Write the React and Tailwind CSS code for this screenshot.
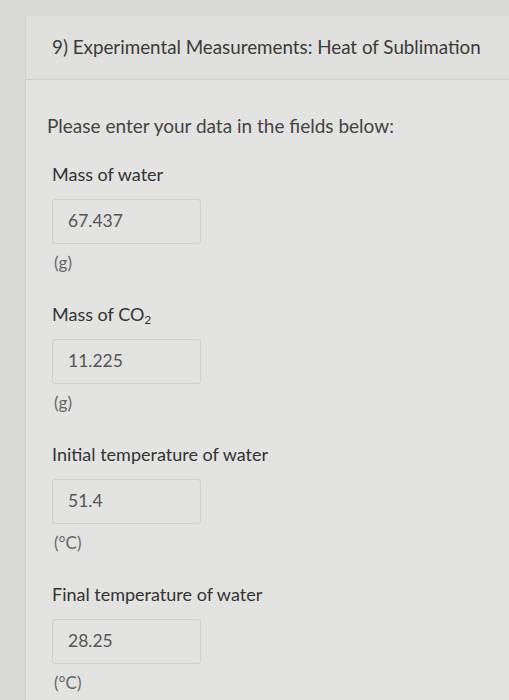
import React from 'react';

const FIELDS = [
  { label: 'Mass of water', value: '67.437', unit: '(g)' },
  { label: <>Mass of CO<sub className="text-[12px]">2</sub></>, value: '11.225', unit: '(g)' },
  { label: 'Initial temperature of water', value: '51.4', unit: '(°C)' },
  { label: 'Final temperature of water', value: '28.25', unit: '(°C)' },
];

export default function App() {
  return (
    <div className="w-[509px] h-[700px] overflow-hidden bg-[#d9d9d7] pl-[25px] pt-[16px] text-[#3b3b3b]" style={{ fontFamily: 'Lato, "Open Sans", sans-serif' }}>
      <div className="h-full bg-[#e2e2e0] border-l border-[#d0d0ce]">
        {/* Header */}
        <div className="h-[64px] flex items-center pl-[26px] bg-[#dfdfdd] border-b border-[#cfcfcd]">
          <h1 className="text-[18.8px] text-[#3a3a3a]">9) Experimental Measurements: Heat of Sublimation</h1>
        </div>

        <div className="pl-[21px] pt-[34px]">
          <p className="text-[19px] leading-[24px] text-[#444]">Please enter your data in the fields below:</p>

          <div className="pl-[5px] pt-[24px]">
            {FIELDS.map((f, i) => (
              <div key={i} className="pb-[27px]">
                <div className="text-[18px] leading-[24px] text-[#333]">{f.label}</div>
                <div className="mt-[13px] w-[149px] h-[45px] border border-[#cfcfcd] rounded-[3px] flex items-center pl-[15px] text-[17.5px] text-[#555]">
                  {f.value}
                </div>
                <div className="mt-[7px] text-[17px] leading-[24px] text-[#666] pl-[2px]">{f.unit}</div>
              </div>
            ))}
          </div>
        </div>
      </div>
    </div>
  );
}
